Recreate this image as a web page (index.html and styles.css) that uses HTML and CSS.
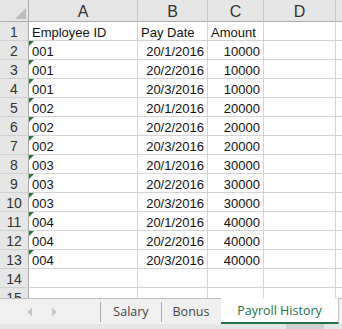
FILE: index.html
```html
<!DOCTYPE html>
<html lang="en">
<head>
  <meta charset="UTF-8">
  <title>Payroll History</title>
  <link rel="stylesheet" href="styles.css">
</head>
<body>

  <div class="sheet">
    <!-- column headers -->
    <div class="row head-row">
      <div class="corner"><span class="select-all"></span></div>
      <div class="col-head c-a">A</div>
      <div class="col-head c-b">B</div>
      <div class="col-head c-c">C</div>
      <div class="col-head c-d">D</div>
      <div class="col-head c-e"></div>
    </div>

    <div class="row">
      <div class="num">1</div>
      <div class="cell c-a">Employee ID</div>
      <div class="cell c-b">Pay Date</div>
      <div class="cell c-c">Amount</div>
      <div class="cell c-d"></div>
      <div class="cell c-e"></div>
    </div>
    <div class="row">
      <div class="num">2</div>
      <div class="cell c-a flag">001</div>
      <div class="cell c-b right">20/1/2016</div>
      <div class="cell c-c right">10000</div>
      <div class="cell c-d"></div>
      <div class="cell c-e"></div>
    </div>
    <div class="row">
      <div class="num">3</div>
      <div class="cell c-a flag">001</div>
      <div class="cell c-b right">20/2/2016</div>
      <div class="cell c-c right">10000</div>
      <div class="cell c-d"></div>
      <div class="cell c-e"></div>
    </div>
    <div class="row">
      <div class="num">4</div>
      <div class="cell c-a flag">001</div>
      <div class="cell c-b right">20/3/2016</div>
      <div class="cell c-c right">10000</div>
      <div class="cell c-d"></div>
      <div class="cell c-e"></div>
    </div>
    <div class="row">
      <div class="num">5</div>
      <div class="cell c-a flag">002</div>
      <div class="cell c-b right">20/1/2016</div>
      <div class="cell c-c right">20000</div>
      <div class="cell c-d"></div>
      <div class="cell c-e"></div>
    </div>
    <div class="row">
      <div class="num">6</div>
      <div class="cell c-a flag">002</div>
      <div class="cell c-b right">20/2/2016</div>
      <div class="cell c-c right">20000</div>
      <div class="cell c-d"></div>
      <div class="cell c-e"></div>
    </div>
    <div class="row">
      <div class="num">7</div>
      <div class="cell c-a flag">002</div>
      <div class="cell c-b right">20/3/2016</div>
      <div class="cell c-c right">20000</div>
      <div class="cell c-d"></div>
      <div class="cell c-e"></div>
    </div>
    <div class="row">
      <div class="num">8</div>
      <div class="cell c-a flag">003</div>
      <div class="cell c-b right">20/1/2016</div>
      <div class="cell c-c right">30000</div>
      <div class="cell c-d"></div>
      <div class="cell c-e"></div>
    </div>
    <div class="row">
      <div class="num">9</div>
      <div class="cell c-a flag">003</div>
      <div class="cell c-b right">20/2/2016</div>
      <div class="cell c-c right">30000</div>
      <div class="cell c-d"></div>
      <div class="cell c-e"></div>
    </div>
    <div class="row">
      <div class="num">10</div>
      <div class="cell c-a flag">003</div>
      <div class="cell c-b right">20/3/2016</div>
      <div class="cell c-c right">30000</div>
      <div class="cell c-d"></div>
      <div class="cell c-e"></div>
    </div>
    <div class="row">
      <div class="num">11</div>
      <div class="cell c-a flag">004</div>
      <div class="cell c-b right">20/1/2016</div>
      <div class="cell c-c right">40000</div>
      <div class="cell c-d"></div>
      <div class="cell c-e"></div>
    </div>
    <div class="row">
      <div class="num">12</div>
      <div class="cell c-a flag">004</div>
      <div class="cell c-b right">20/2/2016</div>
      <div class="cell c-c right">40000</div>
      <div class="cell c-d"></div>
      <div class="cell c-e"></div>
    </div>
    <div class="row">
      <div class="num">13</div>
      <div class="cell c-a flag">004</div>
      <div class="cell c-b right">20/3/2016</div>
      <div class="cell c-c right">40000</div>
      <div class="cell c-d"></div>
      <div class="cell c-e"></div>
    </div>
    <div class="row">
      <div class="num">14</div>
      <div class="cell c-a"></div>
      <div class="cell c-b"></div>
      <div class="cell c-c"></div>
      <div class="cell c-d"></div>
      <div class="cell c-e"></div>
    </div>
    <div class="row">
      <div class="num">15</div>
      <div class="cell c-a"></div>
      <div class="cell c-b"></div>
      <div class="cell c-c"></div>
      <div class="cell c-d"></div>
      <div class="cell c-e"></div>
    </div>
  </div>

  <!-- sheet tabs -->
  <div class="tabbar">
    <div class="nav">
      <span class="arrow arrow-left"></span>
      <span class="arrow arrow-right"></span>
    </div>
    <div class="tab tab-salary">Salary</div>
    <div class="tab tab-bonus">Bonus</div>
    <div class="tab active">Payroll History</div>
  </div>
  <div class="scrollstrip"><span class="thumb"></span></div>

</body>
</html>
```

FILE: styles.css
```css
body {
  margin: 0;
  width: 342px;
  height: 329px;
  overflow: hidden;
  background: #fff;
  font-family: "Liberation Sans", Arial, sans-serif;
  color: #111;
}

.sheet {
  height: 298px;
  overflow: hidden;
}

.row {
  display: flex;
  height: 19px;
}

.head-row {
  height: 22px;
}

.c-a { width: 109px; }
.c-b { width: 70px; }
.c-c { width: 56px; }
.c-d { width: 72px; }
.c-e { flex: 1; }

.corner,
.num {
  width: 29px;
  flex: none;
  box-sizing: border-box;
  background: #e6e6e6;
  border-right: 1px solid #ababab;
  border-bottom: 1px solid #d0d0d0;
}

.corner {
  position: relative;
  border-bottom: 1px solid #ababab;
}

.select-all {
  position: absolute;
  right: 2px;
  bottom: 2px;
  width: 0;
  height: 0;
  border-left: 11px solid transparent;
  border-bottom: 11px solid #bcbcbc;
}

.num {
  font-size: 14px;
  line-height: 15px;
  padding-top: 3px;
  text-align: center;
  color: #333;
}

.col-head {
  flex: none;
  box-sizing: border-box;
  background: #e6e6e6;
  border-right: 1px solid #c8c8c8;
  border-bottom: 1px solid #ababab;
  font-size: 16px;
  line-height: 18px;
  padding-top: 3px;
  text-align: center;
  color: #333;
}

.col-head.c-e {
  flex: 1;
  border-right: none;
}

.cell {
  flex: none;
  box-sizing: border-box;
  position: relative;
  border-right: 1px solid #d4d4d4;
  border-bottom: 1px solid #d4d4d4;
  font-size: 13px;
  line-height: 15px;
  padding: 3px 3px 0 3px;
  white-space: nowrap;
  overflow: hidden;
}

.cell.c-e {
  flex: 1;
  border-right: none;
}

.right {
  text-align: right;
}

/* green "number stored as text" marker */
.flag::before {
  content: "";
  position: absolute;
  left: 0;
  top: 0;
  width: 0;
  height: 0;
  border-top: 5px solid #1e7b34;
  border-right: 5px solid transparent;
}

.tabbar {
  display: flex;
  height: 25px;
  background: #f0f0f0;
  border-top: 1px solid #bdbdbd;
  font-family: "Open Sans", "Noto Sans", sans-serif;
  font-size: 12.5px;
}

.nav {
  width: 100px;
  flex: none;
  display: flex;
  align-items: center;
  gap: 20px;
  padding-left: 27px;
  box-sizing: border-box;
}

.arrow {
  width: 0;
  height: 0;
  border-top: 4px solid transparent;
  border-bottom: 4px solid transparent;
}

.arrow-left {
  border-right: 5px solid #c4c4c4;
}

.arrow-right {
  border-left: 5px solid #c4c4c4;
}

.tab {
  flex: none;
  box-sizing: border-box;
  text-align: center;
  white-space: nowrap;
  color: #444;
  border-left: 1px solid #a9a9a9;
  margin: 3px 0 2px;
  line-height: 20px;
}

.tab-salary {
  width: 61px;
}

.tab-bonus {
  width: 59px;
  margin-right: 1px;
}

.tab.active {
  width: 118px;
  background: #fff;
  color: #217346;
  margin: -1px 0 0 0;
  padding-top: 3px;
  border-left: none;
  border-right: 1px solid #c4c4c4;
  border-bottom: 2px solid #217346;
}

.scrollstrip {
  height: 5px;
  background: #e6e6e6;
  position: relative;
}

.thumb {
  position: absolute;
  left: 286px;
  width: 38px;
  top: 0;
  bottom: 0;
  background: #d0d0d0;
}
```
